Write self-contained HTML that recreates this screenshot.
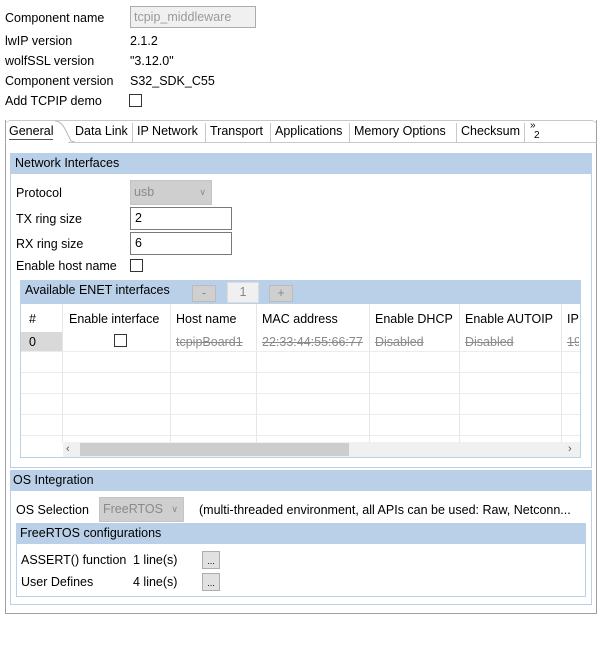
<!DOCTYPE html><html><head><style>
*{box-sizing:border-box;margin:0;padding:0}
body{width:603px;height:651px;background:#fff;font-family:"Liberation Sans",sans-serif;font-size:12.5px;color:#000;position:relative;overflow:hidden}
.a{position:absolute;white-space:nowrap}
.t{position:absolute;white-space:nowrap;line-height:16px}
.hdr{position:absolute;background:#b9d0e8;line-height:21px;padding-left:5px}
.cb{position:absolute;width:13px;height:13px;border:1px solid #333;background:#fff}
.gray{position:absolute;background:#cfcfcf;border:1px solid #c4c4c4;color:#8a8a8a;padding-left:3px;line-height:23px}
.inp{position:absolute;background:#fff;border:1px solid #7a7a7a;padding-left:4px;line-height:21px}
.vl{position:absolute;width:1px;background:#e6e6e6}
.hl{position:absolute;height:1px;background:#ececec}
.s{color:#8a8a8a;text-decoration:line-through}
.btn{position:absolute;width:18px;height:18px;border:1px solid #adadad;background:#e1e1e1;font-size:9px;text-align:center;line-height:18px}
.tab{position:absolute;top:123px;height:19px;border-right:1px solid #c8c8c8;line-height:17px;padding-left:4px}
</style></head><body>
<div class="t" style="left:5px;top:10px">Component name</div>
<div class="a" style="left:130px;top:6px;width:126px;height:22px;background:#f0f0f0;border:1px solid #adadad;color:#9a9a9a;padding-left:3px;line-height:20px">tcpip_middleware</div>
<div class="t" style="left:5px;top:33px">lwIP version</div><div class="t" style="left:130px;top:33px">2.1.2</div>
<div class="t" style="left:5px;top:53px">wolfSSL version</div><div class="t" style="left:130px;top:53px">"3.12.0"</div>
<div class="t" style="left:5px;top:73px">Component version</div><div class="t" style="left:130px;top:73px">S32_SDK_C55</div>
<div class="t" style="left:5px;top:93px">Add TCPIP demo</div><div class="cb" style="left:129px;top:94px"></div>

<div class="a" style="left:5px;top:120px;width:592px;height:494px;border:1px solid #a0a0a0;border-top:none"></div>
<div class="a" style="left:5px;top:120px;width:592px;height:23px;border-top:1px solid #c8c8c8;border-bottom:1px solid #c8c8c8;border-radius:6px 6px 0 0"></div>
<div class="a" style="left:6px;top:121px;width:62px;height:22px;background:#fff;border-radius:5px 0 0 0"></div>
<div class="t" style="left:9px;top:124px;border-bottom:1px solid #555;line-height:15px">General</div>
<svg class="a" style="left:55px;top:121px" width="20" height="22"><path d="M0 0 Q6 0 10 8 L16 20 L20 21" fill="none" stroke="#b8b8b8"/></svg>
<div class="tab" style="left:71px;width:62px">Data Link</div>
<div class="tab" style="left:133px;width:73px">IP Network</div>
<div class="tab" style="left:206px;width:65px">Transport</div>
<div class="tab" style="left:271px;width:79px">Applications</div>
<div class="tab" style="left:350px;width:107px">Memory Options</div>
<div class="tab" style="left:457px;width:68px">Checksum</div>
<div class="t" style="left:530px;top:121px;font-size:10px;line-height:10px">»<br><span style="padding-left:4px">2</span></div>

<div class="a" style="left:10px;top:153px;width:582px;height:315px;border:1px solid #b9d0e8"></div>
<div class="hdr" style="left:10px;top:153px;width:582px">Network Interfaces</div>
<div class="t" style="left:16px;top:185px">Protocol</div>
<div class="gray" style="left:130px;top:180px;width:82px;height:25px">usb<span style="position:absolute;right:5px;font-size:9px">&#8744;</span></div>
<div class="t" style="left:16px;top:211px">TX ring size</div><div class="inp" style="left:130px;top:207px;width:102px;height:23px">2</div>
<div class="t" style="left:16px;top:236px">RX ring size</div><div class="inp" style="left:130px;top:232px;width:102px;height:23px">6</div>
<div class="t" style="left:16px;top:258px">Enable host name</div><div class="cb" style="left:130px;top:259px"></div>

<div class="a" style="left:20px;top:280px;width:561px;height:178px;border:1px solid #b9d0e8"></div>
<div class="hdr" style="left:20px;top:280px;width:561px;height:24px">Available ENET interfaces</div>
<div class="a" style="left:192px;top:285px;width:24px;height:17px;background:#cfcfcf;border:1px solid #bbb;color:#888;text-align:center;line-height:15px">-</div>
<div class="a" style="left:227px;top:282px;width:32px;height:21px;background:#f0f0f0;border:1px solid #ddd;color:#888;text-align:center;line-height:19px">1</div>
<div class="a" style="left:269px;top:285px;width:24px;height:17px;background:#cfcfcf;border:1px solid #bbb;color:#888;text-align:center;line-height:15px">+</div>
<div class="a" style="left:21px;top:332px;width:41px;height:19px;background:#d9d9d9"></div>
<div class="vl" style="left:62px;top:304px;height:138px"></div>
<div class="vl" style="left:170px;top:304px;height:138px"></div>
<div class="vl" style="left:256px;top:304px;height:138px"></div>
<div class="vl" style="left:369px;top:304px;height:138px"></div>
<div class="vl" style="left:459px;top:304px;height:138px"></div>
<div class="vl" style="left:561px;top:304px;height:138px"></div>
<div class="hl" style="left:21px;top:351px;width:559px"></div>
<div class="hl" style="left:21px;top:372px;width:559px"></div>
<div class="hl" style="left:21px;top:393px;width:559px"></div>
<div class="hl" style="left:21px;top:414px;width:559px"></div>
<div class="hl" style="left:21px;top:435px;width:559px"></div>
<div class="t" style="left:29px;top:311px">#</div>
<div class="t" style="left:69px;top:311px">Enable interface</div>
<div class="t" style="left:176px;top:311px">Host name</div>
<div class="t" style="left:262px;top:311px">MAC address</div>
<div class="t" style="left:375px;top:311px">Enable DHCP</div>
<div class="t" style="left:465px;top:311px">Enable AUTOIP</div>
<div class="t" style="left:567px;top:311px">IP</div>
<div class="t" style="left:29px;top:334px">0</div>
<div class="cb" style="left:114px;top:334px"></div>
<div class="t s" style="left:176px;top:334px">tcpipBoard1</div>
<div class="t s" style="left:262px;top:334px">22:33:44:55:66:77</div>
<div class="t s" style="left:375px;top:334px">Disabled</div>
<div class="t s" style="left:465px;top:334px">Disabled</div>
<div class="t s" style="left:567px;top:334px;width:12px;overflow:hidden">19</div>
<div class="a" style="left:63px;top:442px;width:517px;height:15px;background:#f0f0f0"></div>
<div class="a" style="left:80px;top:443px;width:269px;height:13px;background:#cdcdcd"></div>
<div class="t" style="left:66px;top:441px;font-size:11px;color:#555">&#8249;</div>
<div class="t" style="left:568px;top:441px;font-size:11px;color:#555">&#8250;</div>

<div class="a" style="left:10px;top:470px;width:582px;height:135px;border:1px solid #b9d0e8"></div>
<div class="hdr" style="left:10px;top:470px;width:582px;padding-left:3px">OS Integration</div>
<div class="t" style="left:16px;top:502px">OS Selection</div>
<div class="gray" style="left:99px;top:497px;width:85px;height:25px">FreeRTOS<span style="position:absolute;right:5px;font-size:9px">&#8744;</span></div>
<div class="t" style="left:199px;top:502px">(multi-threaded environment, all APIs can be used: Raw, Netconn...</div>
<div class="a" style="left:16px;top:523px;width:570px;height:74px;border:1px solid #b9d0e8"></div>
<div class="hdr" style="left:16px;top:523px;width:570px;padding-left:4px">FreeRTOS configurations</div>
<div class="t" style="left:21px;top:552px">ASSERT() function</div><div class="t" style="left:133px;top:552px">1 line(s)</div>
<div class="btn" style="left:202px;top:551px">...</div>
<div class="t" style="left:21px;top:574px">User Defines</div><div class="t" style="left:133px;top:574px">4 line(s)</div>
<div class="btn" style="left:202px;top:573px">...</div>
</body></html>
